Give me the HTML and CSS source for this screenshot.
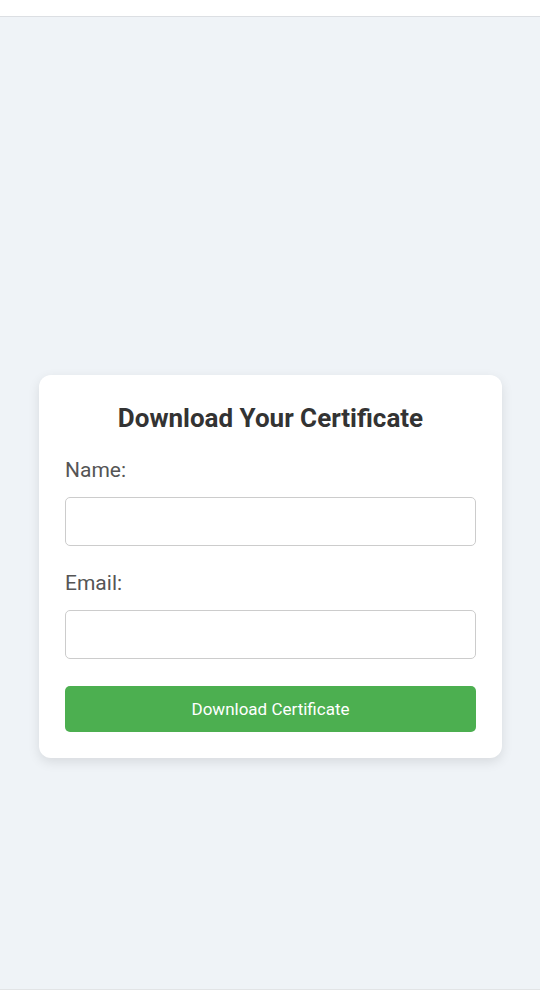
FILE: index.html
```html
<!DOCTYPE html>
<html lang="en">
<head>
  <meta charset="UTF-8" />
  <meta name="viewport" content="width=device-width, initial-scale=1.0"/>
  <title>Download Your Certificate</title>
  <link rel="stylesheet" href="styles.css">
</head>
<body>

  <div class="top-bar"></div>

  <div class="page">
    <div class="container">
      <h2>Download Your Certificate</h2>

      <label for="name">Name:</label>
      <input type="text" id="name">

      <label for="email">Email:</label>
      <input type="email" id="email">

      <button class="download-btn">Download Certificate</button>
    </div>
  </div>

  <div class="bottom-bar"></div>

</body>
</html>
```

FILE: styles.css
```css
body {
  font-family: Roboto, "Liberation Sans", Arial, sans-serif;
  margin: 0;
  background: white;
}

.top-bar {
  height: 16px;
  background: white;
  border-bottom: 1px solid #dcdfe3;
}

.page {
  background: #eff3f7;
  height: 972px;
  padding-top: 358px;
  box-sizing: border-box;
}

.bottom-bar {
  height: 4px;
  border-top: 1px solid #e2e4e6;
  background: white;
  box-sizing: border-box;
}

.container {
  background: white;
  margin: 0 38px 0 39px;
  padding: 28px 26px 26px;
  border-radius: 12px;
  box-shadow: 0px 4px 12px rgba(0,0,0,0.1);
}

h2 {
  color: #333;
  font-size: 26px;
  font-weight: bold;
  text-align: center;
  margin: 0 0 25px;
}

label {
  display: block;
  font-size: 21px;
  color: #555;
  margin-bottom: 15px;
}

input {
  display: block;
  width: 100%;
  height: 49px;
  box-sizing: border-box;
  border: 1px solid #ccc;
  border-radius: 5px;
  margin: 0 0 25px;
  font-size: 16px;
  padding: 10px;
}

#email {
  margin-bottom: 27px;
}

.download-btn {
  display: block;
  width: 100%;
  height: 46px;
  border: none;
  border-radius: 5px;
  background: #4caf50;
  color: white;
  font-family: inherit;
  font-size: 17px;
  cursor: pointer;
}
```
